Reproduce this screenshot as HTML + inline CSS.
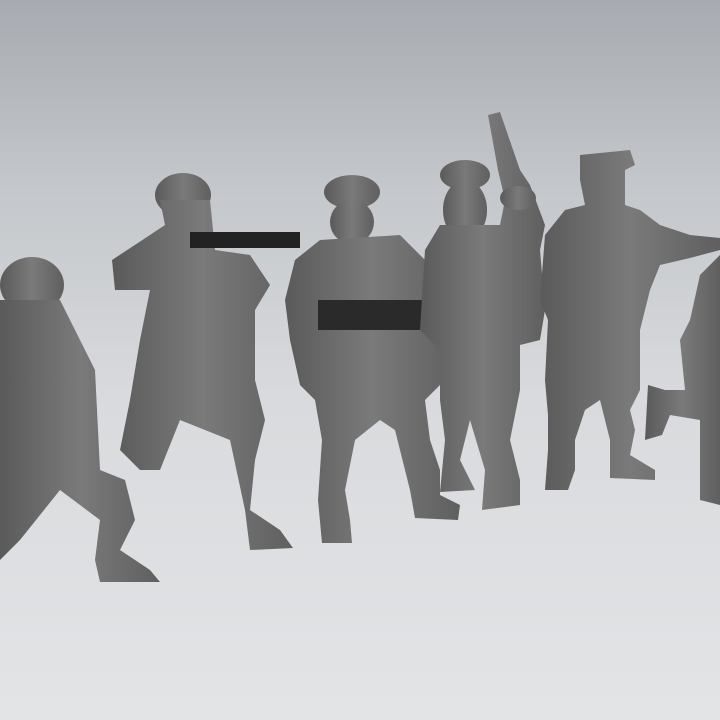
<!DOCTYPE html>
<html><head><style>
html,body{margin:0;padding:0;width:720px;height:720px;overflow:hidden}
body{background:linear-gradient(#a7aab0 0%,#c3c6ca 25%,#d8dadd 55%,#e3e4e6 100%)}
</style></head><body>
<svg width="720" height="720" viewBox="0 0 720 720" xmlns="http://www.w3.org/2000/svg">
<defs>
<linearGradient id="g" x1="0" y1="0" x2="1" y2="0">
<stop offset="0" stop-color="#5a5a5a"/><stop offset="0.5" stop-color="#7a7a7a"/><stop offset="1" stop-color="#5f5f5f"/>
</linearGradient>
</defs>
<g fill="url(#g)">
<ellipse cx="32" cy="285" rx="32" ry="28"/>
<path d="M0 300 L60 300 L95 370 L100 470 L125 480 L135 520 L120 550 L150 570 L160 582 L100 582 L95 560 L100 520 L60 490 L20 540 L0 560 Z"/>
<ellipse cx="183" cy="195" rx="28" ry="22"/>
<path d="M160 200 L210 200 L215 250 L250 255 L270 285 L255 310 L255 380 L265 420 L255 460 L250 510 L280 530 L293 548 L250 550 L245 510 L230 440 L180 420 L160 470 L140 470 L120 450 L130 400 L140 340 L150 290 L115 290 L112 260 L150 235 L165 225 Z"/>
<rect x="190" y="232" width="110" height="16" fill="#222"/>
<ellipse cx="352" cy="192" rx="28" ry="17"/>
<ellipse cx="352" cy="222" rx="22" ry="22"/>
<path d="M320 240 L400 235 L425 260 L440 330 L440 385 L425 400 L430 440 L440 470 L440 495 L460 505 L458 520 L415 518 L410 490 L395 430 L380 420 L355 440 L345 490 L350 520 L352 543 L322 543 L318 500 L322 440 L315 400 L300 385 L290 340 L285 300 L295 260 Z"/>
<rect x="318" y="300" width="175" height="30" fill="#2a2a2a"/>
<ellipse cx="465" cy="175" rx="25" ry="15"/>
<ellipse cx="465" cy="210" rx="22" ry="30"/>
<path d="M488 115 L500 112 L520 170 L530 185 L545 225 L540 250 L545 310 L540 340 L520 345 L520 390 L510 440 L520 480 L520 505 L482 510 L485 470 L470 420 L460 460 L475 490 L440 492 L445 440 L440 400 L440 350 L420 330 L425 250 L440 225 L500 225 L505 200 L498 170 Z"/>
<ellipse cx="518" cy="198" rx="18" ry="12"/>
<path d="M580 155 L630 150 L635 165 L625 170 L625 205 L640 210 L660 225 L690 235 L720 238 L720 250 L690 258 L660 265 L650 290 L640 330 L640 390 L630 410 L635 430 L630 455 L655 470 L655 480 L610 478 L610 440 L600 400 L585 410 L575 440 L575 470 L568 490 L545 490 L548 450 L548 415 L545 380 L548 320 L540 300 L545 235 L565 210 L585 205 L580 180 Z"/>
<path d="M720 255 L700 275 L690 320 L680 340 L685 390 L665 390 L648 385 L645 440 L662 435 L670 415 L700 420 L700 500 L720 505 Z"/>
</g>
</svg>
</body></html>
